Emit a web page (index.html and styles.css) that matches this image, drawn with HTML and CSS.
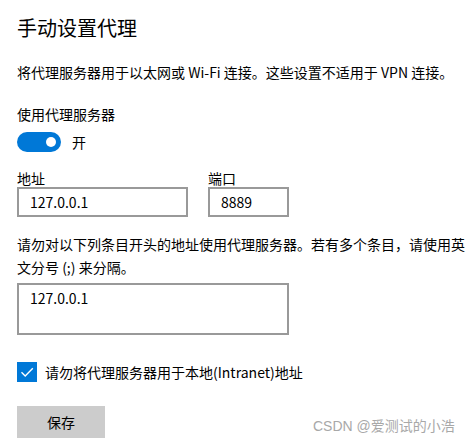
FILE: index.html
```html
<!DOCTYPE html>
<html lang="zh-CN">
<head>
<meta charset="utf-8">
<link rel="stylesheet" href="styles.css">
</head>
<body>
<div class="page">
  <h1 class="title">手动设置代理</h1>
  <p class="desc">将代理服务器用于以太网或 Wi-Fi 连接。这些设置不适用于 VPN 连接。</p>
  <div class="label-use">使用代理服务器</div>
  <div class="toggle-row">
    <span class="toggle"><span class="knob"></span></span>
    <span class="toggle-text">开</span>
  </div>
  <div class="fields">
    <div class="field">
      <div class="field-label">地址</div>
      <div class="input addr">127.0.0.1</div>
    </div>
    <div class="field">
      <div class="field-label">端口</div>
      <div class="input port">8889</div>
    </div>
  </div>
  <p class="exceptions">请勿对以下列条目开头的地址使用代理服务器。若有多个条目，请使用英文分号 (;) 来分隔。</p>
  <div class="textarea">127.0.0.1</div>
  <div class="check-row">
    <span class="checkbox">
      <svg width="20" height="20" viewBox="0 0 20 20"><path d="M4.5 10.2 L8.2 13.9 L15.8 6.2" fill="none" stroke="#fff" stroke-width="1.4"/></svg>
    </span>
    <span class="check-text">请勿将代理服务器用于本地(Intranet)地址</span>
  </div>
  <div class="btn">保存</div>
</div>
<div class="watermark">CSDN @爱测试的小浩</div>
</body>
</html>
```
FILE: styles.css
```css
html, body {
  margin: 0;
  padding: 0;
  background: #fff;
}
body {
  width: 474px;
  height: 442px;
  position: relative;
  overflow: hidden;
  font-family: "Noto Sans CJK SC", sans-serif;
  color: #000;
}
.page {
  padding: 14px 17px 0 17px;
  width: 448px;
}
.title {
  margin: 0;
  font-size: 20px;
  line-height: 28px;
  font-weight: 400;
}
.desc {
  margin: 20px 0 0 0;
  font-size: 14px;
  line-height: 20px;
  white-space: nowrap;
}
.label-use {
  margin-top: 22px;
  font-size: 14px;
  line-height: 20px;
}
.toggle-row {
  margin-top: 8px;
  display: flex;
  align-items: center;
  height: 20px;
}
.toggle {
  width: 44px;
  height: 20px;
  border-radius: 10px;
  background: #0078d7;
  display: flex;
  align-items: center;
  justify-content: flex-end;
  box-sizing: border-box;
  padding-right: 5px;
}
.knob {
  width: 10px;
  height: 10px;
  border-radius: 50%;
  background: #fff;
}
.toggle-text {
  margin-left: 11px;
  font-size: 14px;
  line-height: 20px;
}
.fields {
  margin-top: 17px;
  display: flex;
  gap: 20px;
}
.field-label {
  font-size: 14px;
  line-height: 18px;
}
.input {
  box-sizing: border-box;
  height: 30px;
  border: 2px solid #999;
  font-size: 14px;
  line-height: 26px;
  padding-left: 11px;
}
.addr { width: 171px; }
.port { width: 81px; }
.exceptions {
  margin: 16px 0 0 0;
  font-size: 14px;
  line-height: 23px;
}
.textarea {
  margin-top: 4px;
  box-sizing: border-box;
  width: 272px;
  height: 52px;
  border: 2px solid #999;
  font-size: 14px;
  line-height: 20px;
  padding: 3px 11px;
}
.check-row {
  margin-top: 27px;
  display: flex;
  align-items: center;
  height: 20px;
}
.checkbox {
  width: 20px;
  height: 20px;
  background: #0078d7;
  display: block;
}
.checkbox svg { display: block; }
.check-text {
  margin-left: 8px;
  font-size: 14px;
  line-height: 20px;
}
.btn {
  margin-top: 24px;
  width: 88px;
  height: 32px;
  background: #ccc;
  font-size: 14px;
  line-height: 32px;
  text-align: center;
}
.watermark {
  position: absolute;
  left: 313px;
  top: 417px;
  font-size: 14px;
  line-height: 18px;
  color: #a8a8a8;
  white-space: nowrap;
  font-family: "Liberation Sans", "Noto Sans CJK SC", sans-serif;
}
```
